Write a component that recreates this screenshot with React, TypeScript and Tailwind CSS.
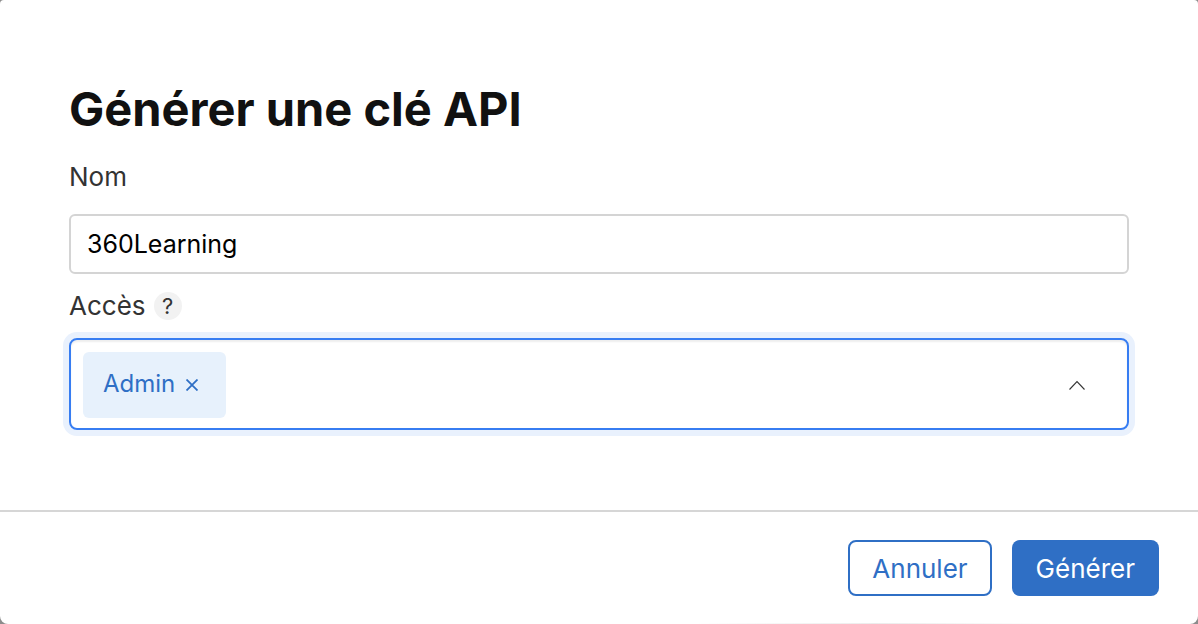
import { useState } from "react";

export default function App() {
  const [name, setName] = useState("360Learning");
  const [open, setOpen] = useState(true);
  const [admin, setAdmin] = useState(true);
  return (
    <div className="min-h-screen bg-[#8c8c8c] font-['Inter',sans-serif] text-[#333333]">
      <form
        role="dialog"
        aria-labelledby="dialog-title"
        className="flex min-h-screen flex-col rounded-t-sm rounded-b-lg bg-white"
        onSubmit={(e) => e.preventDefault()}
      >
        <div className="flex-1 px-[69px] pt-20">
          <h1 id="dialog-title" className="text-[47px] leading-[58px] font-bold text-[#111111]">
            Générer une clé API
          </h1>
          <label htmlFor="key-name" className="mt-5 block text-[26px] leading-[38px]">
            Nom
          </label>
          <input
            id="key-name"
            value={name}
            onChange={(e) => setName(e.target.value)}
            className="mt-[18px] block h-[60px] w-full rounded-md border-2 border-[#d4d4d4] bg-white px-4 text-[25px] text-black outline-none"
          />
          <div className="mt-3 flex h-10 items-center gap-2">
            <span id="access-label" className="text-[26px] leading-[38px]">
              Accès
            </span>
            <button type="button" aria-label="Aide" className="flex size-7 items-center justify-center rounded-full bg-[#f2f2f2] text-[22px] leading-7">
              ?
            </button>
          </div>
          <div
            role="group"
            aria-labelledby="access-label"
            className="mt-3 flex h-[92px] items-start rounded-lg border-2 border-[#377df2] pt-3 pr-[42px] pl-3 shadow-[0_0_0_6px_#e9f1fd,inset_0_2px_2px_#00000012]"
          >
            {admin && (
              <span className="flex h-[66px] items-center gap-[11px] rounded-md bg-[#e7f1fc] pr-7 pl-5 text-[24px] text-[#2f6fc5]">
                <span className="pb-0.5">Admin</span>
                <button type="button" aria-label="Retirer Admin" onClick={() => setAdmin(false)}>
                  <svg className="size-3" viewBox="0 0 12 12" fill="none" stroke="currentColor" strokeWidth="1.8">
                    <path d="M.5.5l11 11M11.5.5l-11 11" />
                  </svg>
                </button>
              </span>
            )}
            <button
              type="button"
              aria-label="Afficher les accès"
              aria-expanded={open}
              onClick={() => setOpen(!open)}
              className="ml-auto flex h-[66px] items-center"
            >
              <svg className="h-[10px] w-4" viewBox="0 0 16 10" fill="none" stroke="#333333" strokeWidth="1.1">
                <path d="M.5 9.500L8 1.500l7.500 8" />
              </svg>
            </button>
          </div>
        </div>
        <div className="flex h-[114px] justify-end gap-5 border-t-2 border-[#d6d6d6] px-[39px] pt-7">
          <button type="button" className="h-14 rounded-lg border-2 border-[#2f6fc5] bg-white px-[22px] text-[26px] text-[#2f6fc5]">
            Annuler
          </button>
          <button type="submit" className="h-14 rounded-lg bg-[#2f6fc5] px-6 text-[26px] text-white">
            Générer
          </button>
        </div>
        <div className="mr-[12%] -mt-px ml-[58%] h-px bg-linear-to-r from-white via-[#ececec] to-white" />
      </form>
    </div>
  );
}
